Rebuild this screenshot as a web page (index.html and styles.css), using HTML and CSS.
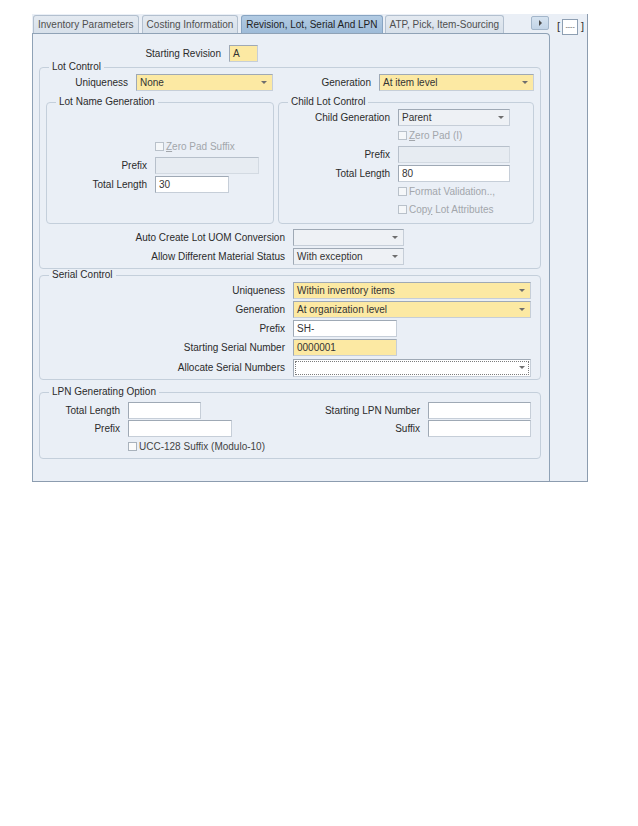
FILE: index.html
```html
<!DOCTYPE html>
<html>
<head>
<meta charset="utf-8">
<link rel="stylesheet" href="styles.css">
</head>
<body>
<div class="window">
  <div class="tabbar">
    <div class="tab first">Inventory Parameters</div>
    <div class="tab">Costing Information</div>
    <div class="tab active">Revision, Lot, Serial And LPN</div>
    <div class="tab">ATP, Pick, Item-Sourcing</div>
    <div class="scroll-btn"><span class="tri-right"></span></div>
    <div class="bracket"><span class="br">[</span><span class="mini">----</span><span class="br">]</span></div>
  </div>
  <div class="body">
    <div class="panel">
      <div class="row rev">
        <span class="lbl w196">Starting Revision</span>
        <span class="fld req w29">A</span>
      </div>

      <fieldset class="grp main lot">
        <legend>Lot Control</legend>
        <div class="row mt1">
          <span class="lbl w96">Uniqueness</span>
          <span class="fld req sel w137"><span class="val">None</span><span class="caret"></span></span>
          <span class="lbl w106">Generation</span>
          <span class="fld req sel w155"><span class="val">At item level</span><span class="caret"></span></span>
        </div>
        <div class="subs">
          <fieldset class="grp sub namegen">
            <legend>Lot Name Generation</legend>
            <div class="cbrow dis ind108"><span class="cb"></span><span><u>Z</u>ero Pad Suffix</span></div>
            <div class="row mt2">
              <span class="lbl w108">Prefix</span>
              <span class="fld off w104"></span>
            </div>
            <div class="row mt2">
              <span class="lbl w108">Total Length</span>
              <span class="fld w74">30</span>
            </div>
          </fieldset>
          <fieldset class="grp sub child">
            <legend>Child Lot Control</legend>
            <div class="row mt1">
              <span class="lbl w119">Child Generation</span>
              <span class="fld gray sel w112"><span class="val">Parent</span><span class="caret"></span></span>
            </div>
            <div class="cbrow dis ind119 mt1"><span class="cb"></span><span><u>Z</u>ero Pad (I)</span></div>
            <div class="row mt2">
              <span class="lbl w119">Prefix</span>
              <span class="fld off w112"></span>
            </div>
            <div class="row mt2">
              <span class="lbl w119">Total Length</span>
              <span class="fld w112">80</span>
            </div>
            <div class="cbrow dis ind119 mt1"><span class="cb"></span><span>Format Validation..,</span></div>
            <div class="cbrow dis ind119 mt1"><span class="cb"></span><span>Cop<u>y</u> Lot Attributes</span></div>
          </fieldset>
        </div>
        <div class="row mt5">
          <span class="lbl w253">Auto Create Lot UOM Conversion</span>
          <span class="fld gray sel w111"><span class="val"></span><span class="caret"></span></span>
        </div>
        <div class="row mt2">
          <span class="lbl w253">Allow Different Material Status</span>
          <span class="fld gray sel w111"><span class="val">With exception</span><span class="caret"></span></span>
        </div>
      </fieldset>

      <fieldset class="grp main serial">
        <legend>Serial Control</legend>
        <div class="row mt1">
          <span class="lbl w253">Uniqueness</span>
          <span class="fld req sel w238"><span class="val">Within inventory items</span><span class="caret"></span></span>
        </div>
        <div class="row mt2">
          <span class="lbl w253">Generation</span>
          <span class="fld req sel w238"><span class="val">At organization level</span><span class="caret"></span></span>
        </div>
        <div class="row mt2">
          <span class="lbl w253">Prefix</span>
          <span class="fld w104">SH-</span>
        </div>
        <div class="row mt2">
          <span class="lbl w253">Starting Serial Number</span>
          <span class="fld req w104">0000001</span>
        </div>
        <div class="row mt3">
          <span class="lbl w253">Allocate Serial Numbers</span>
          <span class="fld sel focus w238 h18"><span class="val"></span><span class="caret"></span></span>
        </div>
      </fieldset>

      <fieldset class="grp main lpn">
        <legend>LPN Generating Option</legend>
        <div class="lpngrid">
          <span class="lbl">Total Length</span>
          <span class="fld w73"></span>
          <span class="lbl">Starting LPN Number</span>
          <span class="fld w103"></span>
          <span class="lbl">Prefix</span>
          <span class="fld w104"></span>
          <span class="lbl">Suffix</span>
          <span class="fld w103"></span>
          <span></span>
          <div class="cbrow en span3"><span class="cb"></span><span>UCC-128 Suffix (Modulo-10)</span></div>
        </div>
      </fieldset>
    </div>
    <div class="strip"></div>
  </div>
</div>
</body>
</html>
```

FILE: styles.css
```css
* { box-sizing: border-box; }

body {
  margin: 0;
  background: #ffffff;
  font-family: "Liberation Sans", Arial, sans-serif;
  font-size: 10px;
  color: #2f2f2f;
}

.window {
  margin: 14px 0 0 32px;
  width: 556px;
  height: 468px;
  background: #eaeff6;
  border-right: 1px solid #8c9caf;
  border-bottom: 1px solid #8c9caf;
  display: flex;
  flex-direction: column;
}

/* ---------- tabs ---------- */
.tabbar {
  height: 19px;
  display: flex;
  align-items: flex-start;
  flex: none;
}

.tab {
  margin-top: 1px;
  height: 18px;
  padding: 0 4px;
  line-height: 17px;
  border: 1px solid #b3c0cf;
  border-bottom: none;
  border-radius: 3px 3px 0 0;
  background: linear-gradient(#e4eaf1, #d7e0ea);
  color: #4f4f4f;
  margin-right: 3px;
  white-space: nowrap;
}
.tab.first { margin-left: 1px; }
.tab.active {
  background: linear-gradient(#b2cbe3, #9ebbd8);
  border-color: #87a4c2;
  color: #1e1e1e;
  margin-right: 2px;
}

.scroll-btn {
  margin-left: auto;
  margin-top: 2px;
  width: 18px;
  height: 14px;
  border: 1px solid #a3b6ca;
  border-radius: 2px;
  background: linear-gradient(#d6e3f0, #c2d4e7);
  display: flex;
  align-items: center;
  justify-content: center;
}
.tri-right {
  width: 0;
  height: 0;
  border-top: 3px solid transparent;
  border-bottom: 3px solid transparent;
  border-left: 3px solid #4d4d4d;
}

.bracket {
  width: 38px;
  height: 19px;
  display: flex;
  align-items: center;
  padding-left: 8px;
  padding-top: 6px;
  color: #333;
}
.br { font-size: 11px; line-height: 15px; }
.mini {
  margin: 0 3px 0 2px;
  width: 16px;
  height: 16px;
  background: #fff;
  border: 1px solid #8e9fb2;
  font-size: 7px;
  line-height: 13px;
  color: #555;
  text-align: center;
  letter-spacing: 0;
}

/* ---------- body ---------- */
.body {
  flex: 1;
  display: flex;
}

.panel {
  width: 518px;
  border: 1px solid #8fa2b6;
  border-bottom: none;
  border-radius: 0 4px 0 0;
  background: #eaeff6;
}

.strip { flex: 1; }

/* ---------- generic rows / fields ---------- */
.row {
  display: flex;
  align-items: center;
  height: 17px;
}
.row.rev { margin-top: 11px; }

.lbl {
  flex: none;
  text-align: right;
  padding-right: 8px;
  line-height: 17px;
  white-space: nowrap;
  color: #2b2b2b;
}

.fld {
  flex: none;
  height: 17px;
  border: 1px solid;
  border-color: #9fa9b5 #c6ced8 #c6ced8 #9fa9b5;
  background: #ffffff;
  padding: 0 3px;
  line-height: 15px;
  color: #333;
  display: flex;
  align-items: center;
  white-space: nowrap;
}
.fld.req { background: #fce9a3; }
.fld.off { background: #e7ecf2; border-color: #b7c0cb #d3dae2 #d3dae2 #b7c0cb; }
.fld.gray { background: #eef1f5; }
.fld.h18 { height: 18px; }
.fld.focus {
  outline: 1px dotted #7c7c7c;
  outline-offset: -3px;
}

.sel .val { flex: 1; }
.caret {
  width: 0;
  height: 0;
  border-left: 3px solid transparent;
  border-right: 3px solid transparent;
  border-top: 3px solid #6e6e6e;
  margin-right: 2px;
}

.cbrow {
  display: flex;
  align-items: center;
  height: 17px;
  white-space: nowrap;
}
.cbrow.dis { color: #a2a6ab; }
.cbrow.en { color: #444; }
.cb {
  width: 9px;
  height: 9px;
  border: 1px solid #b9c1ca;
  background: #f5f7f9;
  margin-right: 2px;
  flex: none;
}
.cbrow.en .cb { border-color: #a9b2bc; background: #fbfbfb; }

/* ---------- group boxes ---------- */
.grp {
  margin: 0;
  padding: 0;
  min-width: 0;
  border: 1px solid #c4cfdb;
  border-radius: 4px;
}
.grp legend {
  margin-left: 9px;
  padding: 0 3px;
  font-size: 10px;
  line-height: 12px;
  height: 12px;
  color: #2b2b2b;
}

.main { width: 502px; margin-left: 6px; }
.lot { margin-top: -1px; padding-bottom: 3px; }
.serial { margin-top: 0; padding-bottom: 3px; }
.lpn { margin-top: 6px; padding-bottom: 3px; }

.subs {
  display: flex;
  margin: 5px 0 0 6px;
}
.sub { height: 128px; }
.namegen { width: 228px; padding-top: 30px; }
.child { width: 256px; margin-left: 4px; }
.sub legend { margin-left: 9px; }

/* LPN grid */
.lpngrid {
  margin-top: 4px;
  display: grid;
  grid-template-columns: 88px 103px 197px 103px;
  grid-auto-rows: 17px;
  row-gap: 1px;
  align-items: center;
}
.lpngrid .span3 { grid-column: 2 / span 3; margin-top: -1px; }

/* ---------- spacing utilities ---------- */
.mt1 { margin-top: 1px; }
.mt2 { margin-top: 2px; }
.mt3 { margin-top: 3px; }
.mt5 { margin-top: 5px; }

.ind108 { padding-left: 108px; }
.ind119 { padding-left: 119px; }

/* ---------- widths ---------- */
.w29 { width: 29px; }
.w73 { width: 73px; }
.w74 { width: 74px; }
.w96 { width: 96px; }
.w103 { width: 103px; }
.w104 { width: 104px; }
.w106 { width: 106px; }
.w108 { width: 108px; }
.w111 { width: 111px; }
.w112 { width: 112px; }
.w119 { width: 119px; }
.w137 { width: 137px; }
.w155 { width: 155px; }
.w196 { width: 196px; }
.w238 { width: 238px; }
.w253 { width: 253px; }
```
